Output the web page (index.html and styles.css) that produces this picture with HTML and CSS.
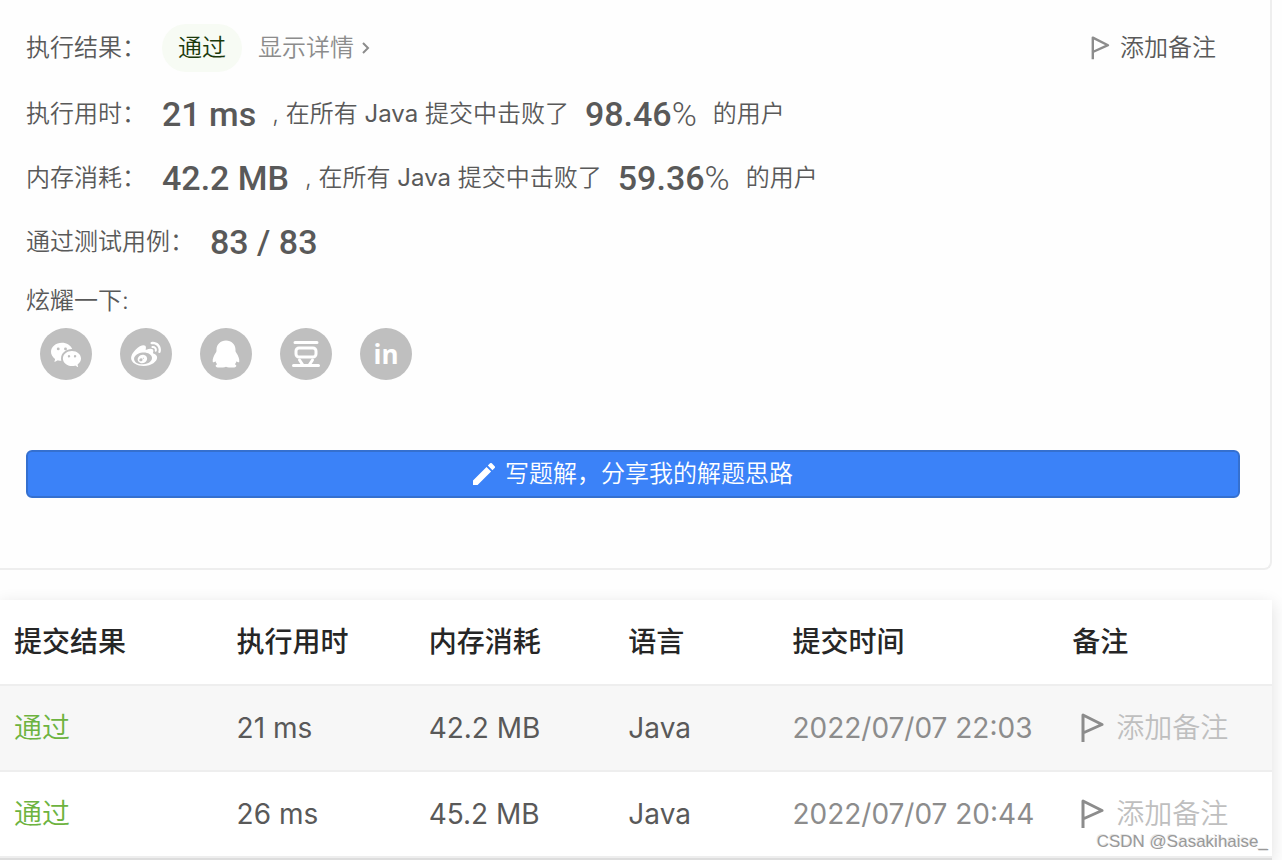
FILE: index.html
```html
<!DOCTYPE html>
<html lang="zh-CN">

<head>
    <meta charset="UTF-8">
    <meta name="viewport" content="width=device-width, initial-scale=1.0">
    <title>提交记录</title>
    <link rel="stylesheet" href="styles.css">
</head>

<body>
    <svg class="defs" aria-hidden="true">
        <symbol id="flag" viewBox="0 0 24 30">
            <path d="M3 29V2L22 11.500L3 20" fill="none" stroke="currentColor" stroke-width="3" stroke-linejoin="round" />
        </symbol>
    </svg>

    <section class="result">
        <div class="row status">
            <span class="label">执行结果：</span>
            <span class="pill">通过</span>
            <a class="detail" href="#">显示详情
                <svg class="chevron" viewBox="0 0 8 14"><path d="M1 2l5 5-5 5" fill="none" stroke="currentColor" stroke-width="2" /></svg>
            </a>
            <button class="note" type="button">
                <svg class="flag-small"><use href="#flag" /></svg>添加备注
            </button>
        </div>
        <div class="row">
            <span class="label">执行用时：</span>
            <span class="number">21 ms</span>
            <span class="text">, 在所有 <span class="latin">Java</span> 提交中击败了</span>
            <span class="number">98.46<span class="percent">%</span></span>
            <span class="text">的用户</span>
        </div>
        <div class="row">
            <span class="label">内存消耗：</span>
            <span class="number">42.2 MB</span>
            <span class="text">, 在所有 <span class="latin">Java</span> 提交中击败了</span>
            <span class="number">59.36<span class="percent">%</span></span>
            <span class="text">的用户</span>
        </div>
        <div class="row">
            <span class="label">通过测试用例：</span>
            <span class="number">83 / 83</span>
        </div>
        <p class="share-title">炫耀一下:</p>
        <div class="share">
            <a href="#" aria-label="微信">
                <svg viewBox="0 0 16 16" width="30" height="30">
                    <path d="M11.176 14.429c-2.665 0-4.826-1.8-4.826-4.018 0-2.22 2.159-4.02 4.824-4.02S16 8.191 16 10.411c0 1.21-.65 2.301-1.666 3.036a.32.32 0 0 0-.12.366l.218.81a.6.6 0 0 1 .029.117.166.166 0 0 1-.162.162.2.2 0 0 1-.092-.03l-1.057-.61a.5.5 0 0 0-.256-.074.5.5 0 0 0-.142.021 5.7 5.7 0 0 1-1.576.22M9.064 9.542a.647.647 0 1 0 .557-1 .645.645 0 0 0-.646.647.6.6 0 0 0 .09.353Zm3.232.001a.646.646 0 1 0 .546-1 .645.645 0 0 0-.644.644.63.63 0 0 0 .098.356" />
                    <path d="M0 6.826c0 1.455.781 2.765 2.001 3.656a.385.385 0 0 1 .143.439l-.161.6-.1.373a.5.5 0 0 0-.032.14.19.19 0 0 0 .193.193q.06 0 .111-.029l1.268-.733a.6.6 0 0 1 .308-.088q.088 0 .171.025a6.8 6.8 0 0 0 1.625.26 4.5 4.5 0 0 1-.177-1.251c0-2.936 2.785-5.02 5.824-5.02l.15.002C10.587 3.429 8.392 2 5.796 2 2.596 2 0 4.16 0 6.826m4.632-1.555a.77.77 0 1 1-1.54 0 .77.77 0 0 1 1.54 0m3.875 0a.77.77 0 1 1-1.54 0 .77.77 0 0 1 1.54 0" />
                </svg>
            </a>
            <a href="#" aria-label="微博">
                <svg viewBox="0 0 512 480" width="30" height="28">
                    <path d="M407 177.600c7.600-24-13.400-46.800-37.400-41.700-22 4.800-28.800-28.100-7.100-32.800 50.100-10.900 92.300 37.100 76.500 84.800-6.800 21.200-38.800 10.800-32-10.300zM214.800 446.700C108.500 446.700 0 395.300 0 310.400c0-44.300 28-95.400 76.300-143.700C176 67 279.500 65.800 249.900 161c-4 13.100 12.300 5.700 12.300 6 79.500-33.600 140.500-16.800 114 51.400-3.700 9.400 1.100 10.900 8.300 13.100 135.700 42.300 34.800 215.200-169.700 215.200zm143.700-146.300c-5.400-55.700-78.500-94-163.400-85.700-84.800 8.600-148.800 60.300-143.400 116s78.500 94 163.400 85.700c84.800-8.600 148.800-60.300 143.400-116zM347.900 35.100c-25.900 5.600-16.800 43.700 8.300 38.300 72.300-15.200 134.800 52.800 111.700 124-7.400 24.200 29.100 37 37.400 12 31.900-99.800-55.100-195.900-157.400-174.300zm-78.500 311c-17.100 38.800-66.800 60-109.100 46.300-40.800-13.100-58-53.400-40.300-89.700 17.700-35.400 63.100-55.400 103.400-45.100 42 10.800 63.100 50.200 46 88.500zm-86.300-30c-12.900-5.400-30 .3-38 12.900-8.300 12.900-4.300 28 8.600 34 13.100 6 30.800.3 39.100-12.900 8-13.100 3.700-28.300-9.700-34zm32.600-13.400c-5.100-1.700-11.400.6-14.300 5.400-2.900 5.100-1.400 10.600 3.700 12.900 5.100 2 11.700-.3 14.600-5.400 2.800-5.200 1.100-10.900-4-12.900z" />
                </svg>
            </a>
            <a href="#" aria-label="QQ">
                <svg viewBox="0 0 28 28" width="28" height="28">
                    <path d="M14 .5C8.500.5 4.500 4.500 4.500 9.500c0 1.500.1 2-.6 3C1.500 16 .500 19 .700 21.500c.2 1.500 1.600.8 2.700-.3.4 1.200.9 2.100 1.700 3-2.400 1-1.800 3.300 2 3.300 3 0 5.200-.1 6.900-.8 1.700.7 3.900.8 6.900.8 3.800 0 4.400-2.300 2-3.300.8-.9 1.300-1.800 1.700-3 1.100 1.100 2.500 1.800 2.700.3.200-2.500-.800-5.500-3.200-9-.7-1-.6-1.500-.6-3C23.500 4.500 19.500.5 14 .5z" />
                </svg>
            </a>
            <a href="#" aria-label="豆瓣">
                <svg class="line" viewBox="0 0 28 28" width="28" height="28">
                    <path d="M3 2.500H25M1.500 25.500H26.500M7.500 20l3 4.500M20.500 20l-3 4.500" />
                    <rect x="4" y="8" width="20" height="9" rx="3" />
                </svg>
            </a>
            <a class="linkedin" href="#">in</a>
        </div>
        <button class="write" type="button">
            <svg viewBox="3 3 18 18" width="22" height="22"><path d="M3 17.250V21h3.750L17.810 9.940l-3.750-3.750L3 17.250zM20.710 7.040a1 1 0 0 0 0-1.410l-2.340-2.340a1 1 0 0 0-1.410 0l-1.830 1.830 3.750 3.750 1.830-1.830z" /></svg>
            写题解，分享我的解题思路
        </button>
    </section>

    <table class="history">
        <thead>
            <tr>
                <th class="col-result">提交结果</th>
                <th class="col-time">执行用时</th>
                <th class="col-memory">内存消耗</th>
                <th class="col-lang">语言</th>
                <th class="col-date">提交时间</th>
                <th>备注</th>
            </tr>
        </thead>
        <tbody>
            <tr>
                <td><a class="pass" href="#">通过</a></td>
                <td>21 ms</td>
                <td>42.2 MB</td>
                <td>Java</td>
                <td class="date">2022/07/07 22:03</td>
                <td><button class="add" type="button"><svg><use href="#flag" /></svg>添加备注</button></td>
            </tr>
            <tr>
                <td><a class="pass" href="#">通过</a></td>
                <td>26 ms</td>
                <td>45.2 MB</td>
                <td>Java</td>
                <td class="date">2022/07/07 20:44</td>
                <td><button class="add" type="button"><svg><use href="#flag" /></svg>添加备注</button></td>
            </tr>
        </tbody>
    </table>
    <div class="watermark">CSDN @Sasakihaise_</div>
</body>

</html>
```
FILE: styles.css
```css
* {
    margin: 0;
    padding: 0;
    box-sizing: border-box;
}

body {
    min-height: 100vh;
    background-color: #fefefe;
    color: #595959;
    font-family: Inter, "Noto Sans CJK SC", sans-serif;
    font-size: 24px;
    font-weight: 350;
    line-height: 1;
}

button {
    font: inherit;
    background: none;
    border: none;
    cursor: pointer;
}

a {
    color: inherit;
    text-decoration: none;
}

.defs {
    display: none;
}

/* result card */
.result {
    margin: 0 10px 30px 0;
    padding: 24px 30px 70px 26px;
    border-right: 2px solid #eee;
    border-bottom: 2px solid #eee;
    border-bottom-right-radius: 8px;
}

.row {
    display: flex;
    align-items: center;
    height: 64px;
    gap: 16px;
    white-space: nowrap;
}

.status {
    height: 48px;
    margin-bottom: 10px;
}

.pill {
    padding: 0 16px;
    line-height: 48px;
    border-radius: 24px;
    background-color: #f7fbf4;
    color: #1b3a0c;
}

.detail {
    display: flex;
    align-items: center;
    gap: 8px;
    color: #8c8c8c;
}

.chevron {
    width: 8px;
    height: 14px;
}

.note {
    display: flex;
    align-items: center;
    gap: 10px;
    margin-left: auto;
    margin-right: 24px;
    color: #595959;
}

.flag-small {
    width: 20px;
    height: 24px;
    color: #8c8c8c;
}

.latin {
    font-weight: 400;
}

.number {
    font-family: Roboto, sans-serif;
    font-size: 34px;
    font-weight: 500;
}

.percent {
    font-weight: 300;
}

.share-title {
    line-height: 54px;
}

.share {
    display: flex;
    gap: 28px;
    padding-left: 14px;
}

.share a {
    display: flex;
    align-items: center;
    justify-content: center;
    width: 52px;
    height: 52px;
    border-radius: 50%;
    background-color: #bfbfbf;
    color: white;
}

.share svg {
    fill: white;
}

.share .line {
    fill: none;
    stroke: white;
    stroke-width: 3;
    stroke-linecap: round;
}

.share .linkedin {
    font-family: "Open Sans", sans-serif;
    font-size: 26px;
    font-weight: 700;
}

.write {
    display: flex;
    align-items: center;
    justify-content: center;
    gap: 10px;
    width: 100%;
    height: 48px;
    margin-top: 70px;
    border: 2px solid #3570cf;
    border-radius: 6px;
    background-color: #3b82f8;
    color: white;
}

.write svg {
    fill: white;
}

/* submissions */
.history {
    width: calc(100% - 10px);
    table-layout: fixed;
    border-collapse: separate;
    border-spacing: 0;
    background-color: white;
    font-size: 28px;
    white-space: nowrap;
    box-shadow: 0 2px 0 #ddd, 0 4px 16px rgba(0, 0, 0, 0.12);
}

.history th,
.history td {
    height: 86px;
    border-bottom: 2px solid #eee;
    text-align: left;
    font-weight: 400;
}

.history th {
    color: #262626;
    font-weight: 500;
}

.history th:first-child,
.history td:first-child {
    padding-left: 14px;
}

.history tbody tr:nth-child(odd) {
    background-color: #f7f7f7;
}

.col-result {
    width: 18.600%;
}

.col-time {
    width: 15.100%;
}

.col-memory {
    width: 15.700%;
}

.col-lang {
    width: 12.900%;
}

.col-date {
    width: 22%;
}

.history .pass {
    color: #6db33f;
    font-weight: 350;
}

.history .date {
    color: #8c8c8c;
}

.add {
    display: flex;
    align-items: center;
    gap: 12px;
    padding-left: 8px;
    color: #bfbfbf;
    font-weight: 350;
}

.add svg {
    width: 24px;
    height: 30px;
    color: #8c8c8c;
}

.watermark {
    position: absolute;
    right: 14px;
    bottom: 8px;
    font-family: "Liberation Sans", sans-serif;
    font-size: 17px;
    font-weight: 400;
    line-height: 20px;
    color: #999;
    text-shadow: -1px -1px 0 #e8e8e8;
}
```
